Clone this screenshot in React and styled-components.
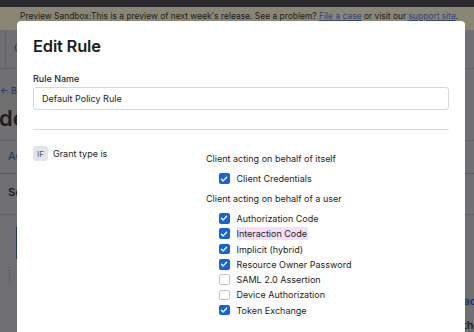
import React from 'react'
import styled, { createGlobalStyle } from 'styled-components'

const GlobalStyle = createGlobalStyle`
  html, body { margin: 0; padding: 0; }
  body {
    width: 474px;
    height: 332px;
    overflow: hidden;
    font-family: Inter, "Liberation Sans", sans-serif;
    color: #1d1d21;
    background: #ffffff;
  }
  #root { position: relative; height: 332px; overflow: hidden; }
`

const grantGroups = [
  {
    title: 'Client acting on behalf of itself',
    items: [{ label: 'Client Credentials', checked: true }],
  },
  {
    title: 'Client acting on behalf of a user',
    items: [
      { label: 'Authorization Code', checked: true },
      { label: 'Interaction Code', checked: true, highlight: true },
      { label: 'Implicit (hybrid)', checked: true },
      { label: 'Resource Owner Password', checked: true },
      { label: 'SAML 2.0 Assertion', checked: false },
      { label: 'Device Authorization', checked: false },
      { label: 'Token Exchange', checked: true },
    ],
  },
]

function CheckIcon() {
  return (
    <svg width="8" height="8" viewBox="0 0 8 8" fill="none">
      <path d="M1.4 4.2 3.2 5.9 6.6 2.2" stroke="#fff" strokeWidth="1.4" strokeLinecap="round" strokeLinejoin="round" />
    </svg>
  )
}

function App() {
  return (
    <>
      <GlobalStyle />
      <Chrome>
        <TopBar />
        <Banner>
          Preview Sandbox:This is a preview of next week's release. See a problem?{' '}
          <BannerLink>File a case</BannerLink> or visit our <BannerLink>support site</BannerLink>.
        </Banner>
      </Chrome>

      <Page>
        <SubHeader>
          <SearchBox>Customize</SearchBox>
          <RightStub />
        </SubHeader>
        <BackLink>← Back to Authorization Servers</BackLink>
        <PageTitle>default</PageTitle>
        <Tabs>
          <Tab $active>Access Policies</Tab>
        </Tabs>
        <Section>Settings</Section>
        <RuleArea>
          <BlueEdge />
          <DragHandle>⋮⋮</DragHandle>
        </RuleArea>
        <SideText $top={294}>act</SideText>
        <SideText $top={318} $dark>the</SideText>
      </Page>

      <Backdrop />

      <Modal>
        <Title>Edit Rule</Title>
        <Label>Rule Name</Label>
        <Input defaultValue="Default Policy Rule" />
        <Divider />
        <ConditionRow>
          <ConditionLead>
            <IfBadge>IF</IfBadge>
            <span>Grant type is</span>
          </ConditionLead>
          <Options>
            {grantGroups.map((group) => (
              <Group key={group.title}>
                <GroupTitle>{group.title}</GroupTitle>
                {group.items.map((item) => (
                  <Option key={item.label}>
                    <Box $checked={item.checked}>{item.checked && <CheckIcon />}</Box>
                    <OptionText $highlight={item.highlight}>{item.label}</OptionText>
                  </Option>
                ))}
              </Group>
            ))}
          </Options>
        </ConditionRow>
      </Modal>
    </>
  )
}

export default App

const Chrome = styled.div`
  position: relative;
  z-index: 2;
`

const TopBar = styled.div`
  height: 7px;
  background: #2b2b30;
`

const Banner = styled.div`
  height: 23px;
  background: #8a8676;
  padding-left: 20px;
  font-size: 8.45px;
  line-height: 19px;
  white-space: nowrap;
  color: #1d1d21;
`

const BannerLink = styled.span`
  color: #34467a;
  text-decoration: underline;
`

const Page = styled.div`
  position: relative;
  height: 302px;
  background: #ffffff;
`

const SubHeader = styled.div`
  height: 38px;
  display: flex;
  border-bottom: 1px solid #d7d7dc;
`

const SearchBox = styled.div`
  margin: 0 0 0 5px;
  padding-left: 8px;
  border-left: 1px solid #d7d7dc;
  font-size: 12px;
  line-height: 36px;
  color: #6e6e78;
  flex: 1;
`

const RightStub = styled.div`
  width: 10px;
`

const BackLink = styled.div`
  margin-top: 16px;
  font-size: 9px;
  color: #1662dd;
`

const PageTitle = styled.h1`
  margin: 8px 0 0 -1px;
  font-size: 22px;
  line-height: 28px;
  font-weight: 600;
  color: #1d1d21;
`

const Tabs = styled.div`
  margin-top: 8px;
  display: flex;
  border-top: 1px solid #d7d7dc;
  border-bottom: 1px solid #b9c6ea;
  height: 32px;
`

const Tab = styled.div`
  padding-left: 8px;
  font-size: 11px;
  line-height: 30px;
  color: ${(p) => (p.$active ? '#1662dd' : '#6e6e78')};
`

const Section = styled.div`
  padding-left: 8px;
  height: 40px;
  font-size: 11px;
  font-weight: 600;
  line-height: 36px;
  border-bottom: 1px solid #d7d7dc;
`

const RuleArea = styled.div`
  position: relative;
  height: 90px;
  padding: 12px 0 0 16px;
`

const BlueEdge = styled.div`
  width: 2px;
  height: 32px;
  background: #1662dd;
`

const DragHandle = styled.div`
  margin: 8px 0 0 -11px;
  width: 6px;
  font-size: 9px;
  line-height: 8px;
  color: #8a8a94;
  word-break: break-all;
`

const SideText = styled.div`
  position: absolute;
  right: -6px;
  top: ${(p) => p.$top - 30}px;
  font-size: 11px;
  font-weight: 600;
  color: ${(p) => (p.$dark ? '#1d1d21' : '#1662dd')};
`

const Backdrop = styled.div`
  position: absolute;
  inset: 0;
  z-index: 1;
  background: rgba(29, 29, 33, 0.64);
`

const Modal = styled.div`
  position: absolute;
  z-index: 3;
  left: 17px;
  top: 21px;
  width: 448px;
  height: 330px;
  box-sizing: border-box;
  padding: 14px 16px 0;
  background: #ffffff;
  border-radius: 4px 4px 0 0;
`

const Title = styled.h2`
  margin: 0;
  font-size: 16.5px;
  line-height: 22px;
  font-weight: 600;
  letter-spacing: -0.2px;
`

const Label = styled.div`
  margin-top: 15px;
  font-size: 9px;
  line-height: 14px;
  font-weight: 500;
`

const Input = styled.input`
  display: block;
  margin-top: 1px;
  width: 100%;
  height: 23px;
  box-sizing: border-box;
  padding: 0 8px;
  border: 1px solid #d7d7dc;
  border-radius: 3px;
  font-family: inherit;
  font-size: 9px;
  color: #1d1d21;
  outline: none;
`

const Divider = styled.hr`
  margin: 19px 0 0;
  border: 0;
  border-top: 1px solid #d7d7dc;
`

const ConditionRow = styled.div`
  margin-top: 16px;
  display: grid;
  grid-template-columns: 173px 1fr;
`

const ConditionLead = styled.div`
  display: flex;
  align-items: center;
  gap: 5px;
  height: 15px;
  font-size: 9px;
`

const IfBadge = styled.span`
  display: inline-flex;
  align-items: center;
  justify-content: center;
  width: 15px;
  height: 15px;
  border-radius: 3px;
  background: #e4e4e8;
  color: #55555e;
  font-size: 8px;
`

const Options = styled.div`
  padding-top: 6px;
  display: flex;
  flex-direction: column;
  gap: 5.5px;
`

const Group = styled.div`
  display: flex;
  flex-direction: column;
`

const GroupTitle = styled.div`
  font-size: 9px;
  line-height: 14px;
  margin-bottom: 5px;
`

const Option = styled.div`
  display: flex;
  align-items: center;
  gap: 7px;
  height: 15.3px;
  padding-left: 13px;
  font-size: 9px;
`

const Box = styled.span`
  display: inline-flex;
  align-items: center;
  justify-content: center;
  width: 10.5px;
  height: 10.5px;
  box-sizing: border-box;
  border-radius: 2px;
  background: ${(p) => (p.$checked ? '#1662dd' : '#ffffff')};
  border: ${(p) => (p.$checked ? 'none' : '1px solid #c4c4ca')};
`

const OptionText = styled.span`
  padding: 1px 1px 1px 0;
  background: ${(p) => (p.$highlight ? '#f4ddf7' : 'transparent')};
`
